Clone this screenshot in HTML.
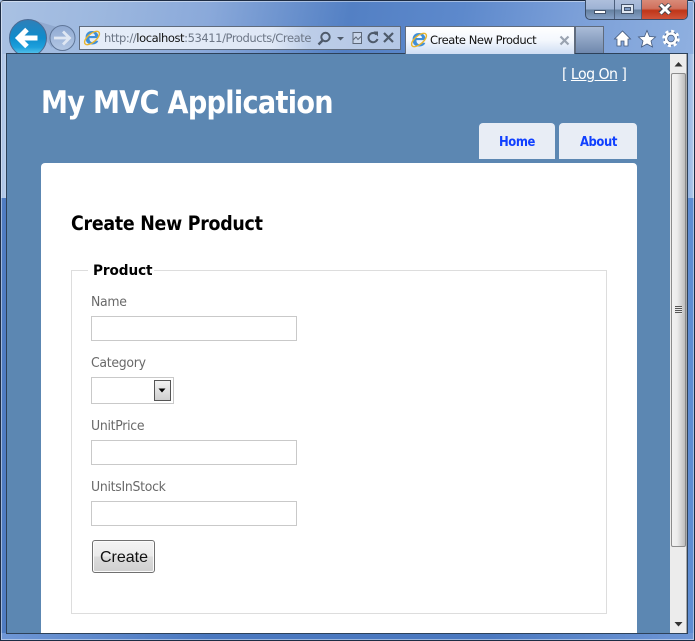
<!DOCTYPE html>
<html><head><meta charset="utf-8">
<style>
html,body{margin:0;padding:0}
body{width:695px;height:641px;position:relative;overflow:hidden;background:#5b84c6;font-family:"DejaVu Sans","Liberation Sans",sans-serif}
.a{position:absolute;box-sizing:border-box}
.t{position:absolute;white-space:nowrap;line-height:1;transform-origin:0 0}
.l{position:absolute;white-space:nowrap;line-height:1;font-size:13px;color:#696969;letter-spacing:-.3px;font-family:"DejaVu Sans",sans-serif;transform:scaleX(.96);transform-origin:0 0}
.in{position:absolute;box-sizing:border-box;background:#fff;border:1px solid #c9c9c9;left:91px;width:206px;height:25px}
</style></head><body>
<div class="a" style="left:0;top:0;width:695px;height:54px;background:linear-gradient(100deg,#a9c1e3 0,#9db8df 14%,#8aa9da 30%,#5380c4 50%,#5d89cc 66%,#7b9fd8 82%,#8fb0e0 100%)"></div>
<div class="a" style="left:0;top:54px;width:7px;height:144px;background:linear-gradient(90deg,#9fb9e0,#c4d6ee)"></div>
<div class="a" style="left:687px;top:54px;width:8px;height:144px;background:linear-gradient(90deg,#8fb0e0,#b9cfec)"></div>
<div class="a" style="left:0;top:198px;width:7px;height:443px;background:#4f7cc2"></div>
<div class="a" style="left:687px;top:198px;width:8px;height:443px;background:#5f8dd2"></div>
<div class="a" style="left:0;top:633px;width:695px;height:8px;background:linear-gradient(90deg,#6f97d6,#4a78c0 30%,#4a78c0 70%,#6f97d6)"></div>
<div class="a" style="left:0;top:0;width:695px;height:641px;border:1px solid #1d2c44;border-radius:4px 4px 0 0"></div>
<div class="a" style="left:1px;top:1px;width:693px;height:639px;border:1px solid rgba(255,255,255,.45)"></div>

<div class="a" style="left:6px;top:53px;width:682px;height:581px;border:1px solid #2d4159"></div>

<!-- window controls -->
<div class="a" style="left:585px;top:0;width:103px;height:20px;border:1px solid #3a4c66;border-top:none;border-radius:0 0 5px 5px;overflow:hidden;background:linear-gradient(#aebfdc 0,#9db2d4 48%,#65809f 52%,#85a0c6 100%)">
 <div class="a" style="left:28px;top:0;width:1px;height:19px;background:#4c5f7c"></div>
 <div class="a" style="left:55px;top:0;width:1px;height:19px;background:#4c5f7c"></div>
 <div class="a" style="left:56px;top:0;width:46px;height:19px;background:linear-gradient(#d98a78 0,#d0705c 45%,#bf3518 55%,#d0543a 100%)"></div>
 <div class="a" style="left:8px;top:10px;width:12px;height:4px;background:#fff;border:1px solid #44536b"></div>
 <div class="a" style="left:35px;top:4px;width:13px;height:10px;background:#dfe7f2;border:1px solid #44536b"></div>
 <div class="a" style="left:38px;top:7px;width:7px;height:4px;background:#7f9bc3;border:1px solid #44536b"></div>
 <svg class="a" style="left:72px;top:3px" width="14" height="12"><path d="M2 1.500L12 10.500M12 1.500L2 10.500" stroke="#44444a" stroke-width="5"/><path d="M2.500 1.500L11.500 10.500M11.500 1.500L2.500 10.500" stroke="#fff" stroke-width="3"/></svg>
</div>

<!-- back / forward -->
<svg class="a" style="left:8px;top:18px" width="70" height="35">
 <path d="M22 1L52 10L44 30Z" fill="#8aa3c9" opacity=".7"/>
 <defs>
  <linearGradient id="b" x1="0" y1="0" x2="0" y2="1"><stop offset="0" stop-color="#2f7fb8"/><stop offset=".5" stop-color="#0f8ccc"/><stop offset=".75" stop-color="#1ca0dc"/><stop offset="1" stop-color="#6fd0f0"/></linearGradient>
  <linearGradient id="f" x1="0" y1="0" x2="0" y2="1"><stop offset="0" stop-color="#8fa9d2"/><stop offset="1" stop-color="#b3c7e4"/></linearGradient>
 </defs>
 <circle cx="20" cy="20" r="18.500" fill="url(#b)" stroke="#4d6a92"/>
 <path d="M29.500 20H12M19 11.500L10.500 20L19 28.500" fill="none" stroke="#fff" stroke-width="5"/>
 <circle cx="54.500" cy="20" r="12.500" fill="url(#f)" stroke="#5f7698"/>
 <path d="M46 20H61M55 13.500L61.500 20L55 26.500" fill="none" stroke="#dfe7f3" stroke-width="2.800"/>
</svg>

<!-- address bar -->
<div class="a" style="left:79px;top:26px;width:322px;height:24px;border:1px solid #5f6b7d;background:linear-gradient(90deg,#e6edf8 0,#dfe8f6 60%,#bccde8 72%,#b4c7e5 100%)"></div>
<svg class="a" style="left:83px;top:29px" width="18" height="18"><text x="1.500" y="15.500" font-family="Liberation Sans" font-size="25" font-weight="bold" fill="#3f8fd8" textLength="15" lengthAdjust="spacingAndGlyphs">e</text><ellipse cx="9" cy="9" rx="9" ry="4.200" transform="rotate(-40 9 9)" fill="none" stroke="#e8b52e" stroke-width="1.400"/></svg>
<div class="t" style="left:104px;top:33px;font-size:11.500px;font-family:'DejaVu Sans',sans-serif;color:#6c7686;letter-spacing:-.42px">http://<span style="color:#111">localhost</span>:53411/Products/Create</div>
<svg class="a" style="left:316px;top:30px" width="85" height="17">
 <circle cx="9.500" cy="7" r="4.200" fill="none" stroke="#4e5a6a" stroke-width="2"/><path d="M6.500 10.500L2.500 14.500" stroke="#4e5a6a" stroke-width="2.400"/>
 <path d="M21 7H28L24.500 10.500Z" fill="#4e5a6a"/>
 <rect x="37" y="2.500" width="8.500" height="11" fill="#c9d6ea" stroke="#5d6878"/><path d="M37 10L40 7L42 9.500L45 6.500" stroke="#5d6878" fill="none"/>
 <path d="M60.500 4.500A4.600 4.600 0 1 0 61.500 9" fill="none" stroke="#4e5a6a" stroke-width="2"/><path d="M57.500 1.500L62 1.500L62 6.500Z" fill="#4e5a6a"/>
 <path d="M68 3L77 12M77 3L68 12" stroke="#4e5a6a" stroke-width="2.200"/>
</svg>

<!-- tab -->
<div class="a" style="left:405px;top:26px;width:170px;height:28px;border:1px solid #5f6b7d;border-bottom:none;background:linear-gradient(#fff 0,#f3f7fd 50%,#cfddf3 100%)"></div>
<svg class="a" style="left:410px;top:31px" width="18" height="18"><text x="1.500" y="15.500" font-family="Liberation Sans" font-size="25" font-weight="bold" fill="#3f8fd8" textLength="15" lengthAdjust="spacingAndGlyphs">e</text><ellipse cx="9" cy="9" rx="9" ry="4.200" transform="rotate(-40 9 9)" fill="none" stroke="#e8b52e" stroke-width="1.400"/></svg>
<div class="t" style="left:430px;top:35px;font-size:11.500px;font-family:'DejaVu Sans',sans-serif;color:#111;letter-spacing:-.45px">Create New Product</div>
<svg class="a" style="left:559px;top:35px" width="11" height="11"><path d="M1.500 1.500L9.500 9.500M9.500 1.500L1.500 9.500" stroke="#9aa3b0" stroke-width="2.200"/></svg>
<div class="a" style="left:575px;top:26px;width:29px;height:27px;border:1px solid #5f6b7d;border-bottom:none;background:linear-gradient(#aabcd8,#6f88ad)"></div>

<!-- toolbar icons -->
<svg class="a" style="left:613px;top:29px" width="70" height="20">
 <path d="M9.500 2L1.500 10H4V17H8V12H11V17H15V10H17.500Z" fill="#fff" stroke="#43587a" stroke-width=".8"/>
 <path d="M34 1.500L36.500 7.500L42.500 8L38 12L39.500 18L34 15L28.500 18L30 12L25.500 8L31.500 7.500Z" fill="#fff" stroke="#43587a" stroke-width=".8"/>
 <circle cx="58" cy="9.500" r="5" fill="none" stroke="#43587a" stroke-width="4"/>
 <circle cx="58" cy="9.500" r="7.400" fill="none" stroke="#fff" stroke-width="2.600" stroke-dasharray="3 2.800"/>
 <circle cx="58" cy="9.500" r="5" fill="none" stroke="#fff" stroke-width="2.600"/>
</svg>

<!-- page -->
<div class="a" style="left:7px;top:54px;width:663px;height:579px;background:#5c87b2"></div>
<div class="t" style="left:562px;top:67px;font-size:15px;color:#fff;letter-spacing:-.6px;font-family:'DejaVu Sans',sans-serif;transform:scaleX(.945)">[ <u>Log On</u> ]</div>
<div class="t" style="left:41px;top:88px;font-size:31px;font-weight:bold;color:#fff;font-family:'DejaVu Sans',sans-serif;letter-spacing:-.8px;transform:scaleX(.875)">My MVC Application</div>

<div class="a" style="left:479px;top:123px;width:76px;height:36px;background:#e8edf5;border-radius:4px 4px 0 0"></div>
<div class="a" style="left:559px;top:123px;width:78px;height:36px;background:#e8edf5;border-radius:4px 4px 0 0"></div>
<div class="t" style="left:499px;top:136px;font-size:13.500px;font-weight:bold;color:#1040ff;letter-spacing:-.5px;font-family:'DejaVu Sans',sans-serif;transform:scaleX(.86)">Home</div>
<div class="t" style="left:580px;top:136px;font-size:13.500px;font-weight:bold;color:#1040ff;letter-spacing:-.5px;font-family:'DejaVu Sans',sans-serif;transform:scaleX(.86)">About</div>

<div class="a" style="left:41px;top:163px;width:596px;height:470px;background:#fff;border-radius:4px 4px 0 0"></div>
<div class="t" style="left:71px;top:214px;font-size:19.500px;font-weight:bold;color:#000;letter-spacing:-.3px;font-family:'DejaVu Sans',sans-serif;transform:scaleX(.893)">Create New Product</div>

<div class="a" style="left:71px;top:270px;width:536px;height:344px;border:1px solid #ddd"></div>
<div class="a" style="left:88px;top:262px;width:66px;height:18px;background:#fff"></div>
<div class="t" style="left:93px;top:264px;font-size:14.500px;font-weight:bold;color:#000;letter-spacing:-.1px;font-family:'DejaVu Sans',sans-serif;transform:scaleX(.94)">Product</div>

<div class="l" style="left:91px;top:296px">Name</div>
<div class="in" style="top:316px"></div>
<div class="l" style="left:91px;top:357px">Category</div>
<div class="a" style="left:91px;top:377px;width:83px;height:27px;background:#fff;border:1px solid #c9c9c9"></div>
<div class="a" style="left:154px;top:380px;width:17px;height:21px;border:1px solid #555;background:linear-gradient(#f2f2f2,#cfcfcf)"></div>
<svg class="a" style="left:158px;top:388px" width="9" height="6"><path d="M.5 .5H7.500L4 4.500Z" fill="#000"/></svg>
<div class="l" style="left:91px;top:420px">UnitPrice</div>
<div class="in" style="top:440px"></div>
<div class="l" style="left:91px;top:481px">UnitsInStock</div>
<div class="in" style="top:501px"></div>

<div class="a" style="left:92px;top:540px;width:63px;height:33px;border:1px solid #707070;border-radius:3px;background:linear-gradient(#f3f3f3 0,#ebebeb 48%,#dcdcdc 52%,#cfcfcf 100%);box-shadow:inset 0 0 0 1px #fbfbfb"></div>
<div class="t" style="left:100px;top:550px;font-size:16px;color:#111;font-family:'Liberation Sans',sans-serif">Create</div>

<!-- scrollbar -->
<div class="a" style="left:670px;top:54px;width:17px;height:579px;background:#ececec;border-right:1px solid #a8a8a8"></div>
<svg class="a" style="left:674px;top:61px" width="10" height="7"><path d="M.5 5.500H8.500L4.500 1Z" fill="#333"/></svg>
<div class="a" style="left:671px;top:73px;width:15px;height:474px;border:1px solid #8c8c8c;border-radius:2px;background:linear-gradient(90deg,#f2f2f2 0,#ececec 40%,#c9c9c9 85%,#bdbdbd 100%)"></div>
<div class="a" style="left:675px;top:306px;width:7px;height:8px;background:repeating-linear-gradient(#555 0,#555 1px,#e8e8e8 1px,#e8e8e8 2px)"></div>
<svg class="a" style="left:674px;top:621px" width="10" height="7"><path d="M.5 1H8.500L4.500 5.500Z" fill="#333"/></svg>
</body></html>
